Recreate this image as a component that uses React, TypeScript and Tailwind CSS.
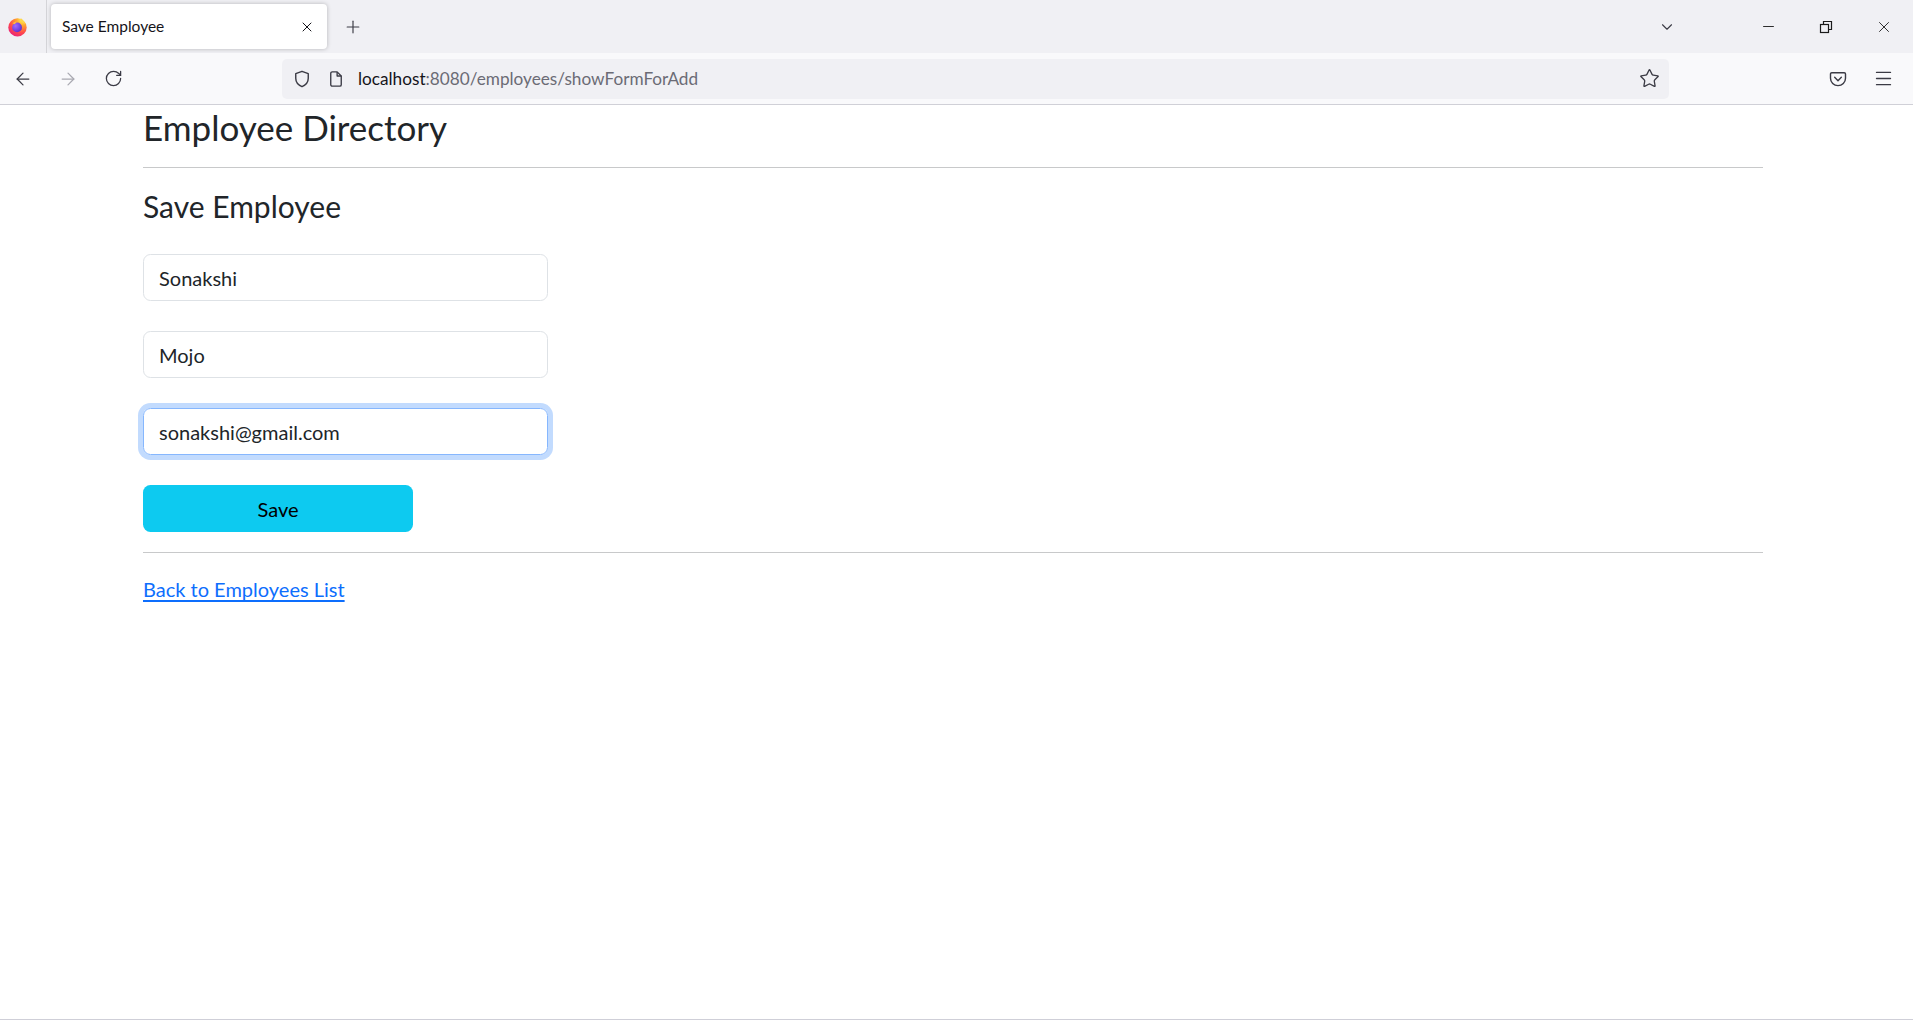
import React from 'react';
import { ArrowLeft, ArrowRight, RotateCw, Star, Menu, X, Plus, ChevronDown, Minus } from 'lucide-react';

const FirefoxLogo: React.FC = () => (
  <svg width="21" height="21" viewBox="0 0 24 24">
    <defs>
      <radialGradient id="ffOuter" cx="0.75" cy="0.1" r="1.05">
        <stop offset="0" stopColor="#fff44f" />
        <stop offset="0.3" stopColor="#ffa22e" />
        <stop offset="0.65" stopColor="#ff4a4a" />
        <stop offset="1" stopColor="#e31587" />
      </radialGradient>
      <radialGradient id="ffInner" cx="0.35" cy="0.35" r="0.75">
        <stop offset="0" stopColor="#a06bff" />
        <stop offset="1" stopColor="#592acb" />
      </radialGradient>
    </defs>
    <circle cx="12" cy="13" r="10.5" fill="url(#ffOuter)" />
    <circle cx="11.5" cy="13" r="5.6" fill="url(#ffInner)" />
    <path d="M15.5 2.2c2.8 1.8 4.6 4.6 4.9 7.6-1.6-2.4-3.7-3.4-5.6-3.2 1.2-1.3 1.3-2.9.7-4.4z" fill="#ffd54a" />
    <path d="M6.2 8.6c1.4-1.6 3.4-2.3 5.6-2-1.4.6-2.4 1.6-2.6 2.9-1.1-.4-2-.6-3-.9z" fill="#ffbd3e" />
  </svg>
);

const ShieldIcon: React.FC = () => (
  <svg width="20" height="20" viewBox="0 0 24 24" fill="none" stroke="#3b3b45" strokeWidth="1.7" strokeLinejoin="round">
    <path d="M12 2.8 4.5 5.6v5.6c0 4.6 3.1 8.2 7.5 10 4.4-1.8 7.5-5.4 7.5-10V5.6z" />
  </svg>
);

const PageIcon: React.FC = () => (
  <svg width="18" height="18" viewBox="0 0 24 24" fill="none" stroke="#3b3b45" strokeWidth="1.8" strokeLinejoin="round">
    <path d="M7 2.5h6.5L19 8v11.5a2 2 0 0 1-2 2H7a2 2 0 0 1-2-2v-15a2 2 0 0 1 2-2z" />
    <path d="M13.5 2.5V8H19" />
  </svg>
);

const PocketIcon: React.FC = () => (
  <svg width="20" height="20" viewBox="0 0 24 24" fill="none" stroke="#3b3b45" strokeWidth="1.7" strokeLinecap="round" strokeLinejoin="round">
    <path d="M4.5 4.5h15a1.5 1.5 0 0 1 1.5 1.5v5a9 9 0 0 1-18 0V6a1.5 1.5 0 0 1 1.5-1.5z" />
    <path d="m8 10 4 4 4-4" />
  </svg>
);

const RestoreIcon: React.FC = () => (
  <svg width="14" height="14" viewBox="0 0 14 14" fill="none" stroke="#1b1b1b" strokeWidth="1.2">
    <rect x="1.5" y="4.5" width="8" height="8" />
    <path d="M4.5 4.5v-3h8v8h-3" />
  </svg>
);

const App: React.FC = () => {
  return (
    <div className="flex h-[1020px] flex-col overflow-hidden border-b border-[#cfcfd8] bg-white font-['Lato',sans-serif]">
      {/* Tab strip */}
      <div className="flex h-[53px] shrink-0 items-start bg-[#f0f0f4]">
        <div className="flex h-[53px] w-[47px] items-center border-r border-[#d4d4d8] pl-[7px]">
          <FirefoxLogo />
        </div>
        <div className="ml-[4px] mt-[4px] flex h-[45px] w-[276px] items-center rounded-[4px] bg-white pl-[11px] pr-[12px] shadow-[0_0_4px_rgba(0,0,0,0.25)]">
          <span className="flex-1 text-[15.5px] text-[#15141a]">Save Employee</span>
          <X size={16} strokeWidth={1.5} className="text-[#15141a]" />
        </div>
        <div className="ml-[16px] flex h-[53px] items-center">
          <Plus size={20} strokeWidth={1.4} className="text-[#3b3b45]" />
        </div>
        <div className="flex-1" />
        <div className="flex h-[53px] w-[34px] items-center justify-center">
          <ChevronDown size={18} strokeWidth={1.5} className="text-[#3b3b45]" />
        </div>
        <div className="w-[55px]" />
        <div className="flex h-[53px] w-[58px] items-center justify-center">
          <Minus size={17} strokeWidth={1.3} className="text-[#1b1b1b]" />
        </div>
        <div className="flex h-[53px] w-[58px] items-center justify-center">
          <RestoreIcon />
        </div>
        <div className="flex h-[53px] w-[58px] items-center justify-center">
          <X size={18} strokeWidth={1.2} className="text-[#1b1b1b]" />
        </div>
      </div>

      {/* Navigation toolbar */}
      <div className="flex h-[52px] shrink-0 items-center border-b border-[#d0d0d7] bg-[#f9f9fb]">
        <div className="ml-[3px] flex gap-[5px]">
          <button className="flex h-[40px] w-[40px] items-center justify-center text-[#3b3b45]">
            <ArrowLeft size={20} strokeWidth={1.5} />
          </button>
          <button className="flex h-[40px] w-[40px] items-center justify-center text-[#a9a9b1]">
            <ArrowRight size={20} strokeWidth={1.5} />
          </button>
          <button className="flex h-[40px] w-[40px] items-center justify-center text-[#3b3b45]">
            <RotateCw size={19} strokeWidth={1.6} />
          </button>
        </div>
        <div className="ml-[149px] flex h-[40px] w-[1387px] items-center rounded-[5px] bg-[#f0f0f4] pl-[10px] pr-[9px]">
          <ShieldIcon />
          <div className="ml-[15px]">
            <PageIcon />
          </div>
          <div className="ml-[13px] flex-1 text-[17.2px] leading-none">
            <span className="text-[#15141a]">localhost</span>
            <span className="text-[#6b6b75]">:8080/employees/showFormForAdd</span>
          </div>
          <Star size={21} strokeWidth={1.5} className="text-[#3b3b45]" />
        </div>
        <div className="flex-1" />
        <div className="mr-[10px] flex gap-[5px]">
          <button className="flex h-[40px] w-[40px] items-center justify-center">
            <PocketIcon />
          </button>
          <button className="flex h-[40px] w-[40px] items-center justify-center text-[#3b3b45]">
            <Menu size={21} strokeWidth={1.5} />
          </button>
        </div>
      </div>

      {/* Page content */}
      <div className="ml-[143px] w-[1620px] text-[#212529]">
        <h3 className="pt-[1px] text-[35px] leading-[1.2]">Employee Directory</h3>
        <hr className="mt-[19px] border-t border-[#c8c9ca]" />
        <h4 className="mt-[20px] text-[30px] leading-[1.2]">Save Employee</h4>

        <form className="mt-[30px] flex flex-col gap-[30px]">
          <input
            type="text"
            defaultValue="Sonakshi"
            className="h-[47px] w-[405px] rounded-[7.5px] border border-[#dee2e6] px-[15px] text-[20px] text-[#212529] outline-none"
          />
          <input
            type="text"
            defaultValue="Mojo"
            className="h-[47px] w-[405px] rounded-[7.5px] border border-[#dee2e6] px-[15px] text-[20px] text-[#212529] outline-none"
          />
          <input
            type="text"
            defaultValue="sonakshi@gmail.com"
            className="h-[47px] w-[405px] rounded-[7.5px] border border-[#86b7fe] px-[15px] text-[20px] text-[#212529] shadow-[0_0_0_5px_rgba(13,110,253,0.25)] outline-none"
          />
          <button
            type="button"
            className="h-[47px] w-[270px] rounded-[7.5px] bg-[#0dcaf0] text-[20px] text-black"
          >
            Save
          </button>
        </form>

        <hr className="mt-[20px] border-t border-[#c8c9ca]" />
        <div className="mt-[21px] text-[20px] leading-[1.5]">
          <a href="#" className="text-[#0d6efd] underline underline-offset-[3px]">
            Back to Employees List
          </a>
        </div>
      </div>
    </div>
  );
};

export default App;
